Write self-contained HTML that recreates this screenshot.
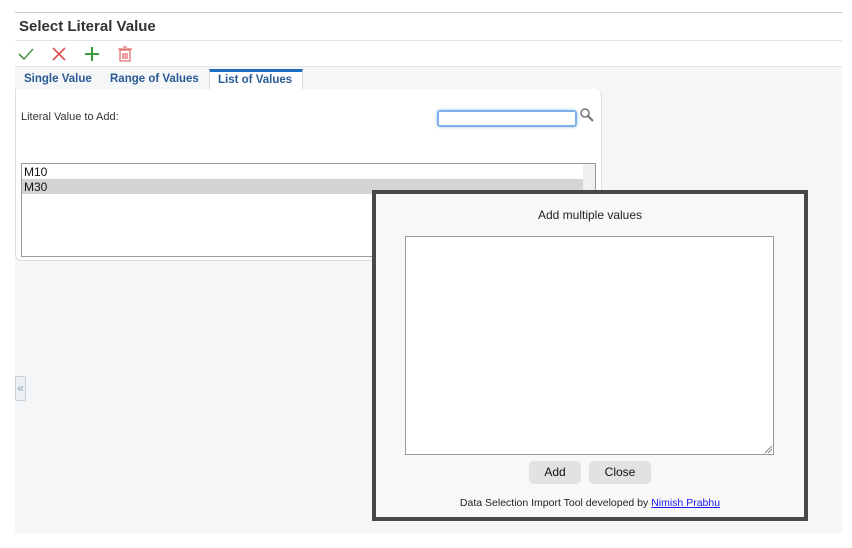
<!DOCTYPE html>
<html><head><style>
*{box-sizing:border-box;margin:0;padding:0}
body{width:852px;height:548px;background:#fff;font-family:"Liberation Sans",Arial,sans-serif;position:relative;overflow:hidden;color:#222}
.abs{position:absolute}
</style></head><body>
<div class="abs" style="left:15px;top:12px;width:827px;height:1px;background:#c8c8c8"></div>
<div class="abs" style="left:19px;top:18px;font-size:15px;font-weight:bold;color:#333">Select Literal Value</div>
<div class="abs" style="left:15px;top:40px;width:827px;height:1px;background:#e2e6ea"></div>
<svg class="abs" style="left:17px;top:45px" width="120" height="18">
<path d="M2 9 L7 14 L16 4" stroke="#4a9a4a" stroke-width="1.6" fill="none"/>
<path d="M36 3 L48 15 M48 3 L36 15" stroke="#e05050" stroke-width="1.6"/>
<path d="M75 2 V16 M68 9 H82" stroke="#3a9a3a" stroke-width="2"/>
<rect x="103" y="5" width="10" height="11" fill="none" stroke="#e07070" stroke-width="1.3"/>
<rect x="105" y="8" width="6" height="6" fill="#f0a0a0"/>
<path d="M101 4 H115 M106 2 H110" stroke="#e07070" stroke-width="1.3"/>
</svg>
<div class="abs" style="left:15px;top:66px;width:827px;height:467px;background:#f5f6f8"></div>
<div class="abs" style="left:15px;top:66px;width:827px;height:1px;background:#e2e6ea"></div>
<div class="abs" style="left:24px;top:73px;font-size:11.5px;font-weight:bold;color:#2a5a96">Single Value</div>
<div class="abs" style="left:110px;top:73px;font-size:11.5px;font-weight:bold;color:#2a5a96">Range of Values</div>
<div class="abs" style="left:209px;top:69px;width:94px;height:21px;background:#fff;border-top:3px solid #1f6fc0;border-left:1px solid #d8dde2;border-right:1px solid #d8dde2"></div>
<div class="abs" style="left:218px;top:74px;font-size:11.5px;font-weight:bold;color:#2a5a96">List of Values</div>
<div class="abs" style="left:15px;top:89px;width:587px;height:172px;background:#fff;border:1px solid #d8dde2;border-top:none;border-radius:0 6px 6px 6px"></div>
<div class="abs" style="left:209px;top:89px;width:94px;height:2px;background:#fff"></div>
<div class="abs" style="left:21px;top:111px;font-size:11px;color:#333">Literal Value to Add:</div>
<div class="abs" style="left:437px;top:110px;width:140px;height:17px;border:2px solid #7fb0ea;border-radius:3px;box-shadow:0 0 3px #9cc4f0"></div>
<svg class="abs" style="left:579px;top:107px" width="16" height="16"><circle cx="6" cy="6" r="4" fill="none" stroke="#777" stroke-width="1.5"/><path d="M9 9 L14 14" stroke="#777" stroke-width="2.2"/></svg>
<div class="abs" style="left:21px;top:163px;width:575px;height:94px;border:1px solid #999;background:#fff"></div>
<div class="abs" style="left:583px;top:164px;width:12px;height:92px;background:#f0f0f0"></div>
<div class="abs" style="left:22px;top:179px;width:561px;height:15px;background:#d4d4d4"></div>
<div class="abs" style="left:24px;top:165px;font-size:12px;color:#111">M10</div>
<div class="abs" style="left:24px;top:180px;font-size:12px;color:#111">M30</div>
<div class="abs" style="left:15px;top:376px;width:11px;height:25px;border:1px solid #c8d0d8;border-radius:2px;background:#eef1f4;font-size:12px;color:#8aa0b8;text-align:center;line-height:22px">«</div>
<div class="abs" style="left:372px;top:190px;width:436px;height:331px;border:4px solid #484848;background:#f8f8f8"></div>
<div class="abs" style="left:372px;top:208px;width:436px;text-align:center;font-size:12px;color:#222">Add multiple values</div>
<div class="abs" style="left:405px;top:236px;width:369px;height:219px;border:1px solid #999;background:#fff"></div>
<svg class="abs" style="left:763px;top:444px" width="10" height="10"><path d="M2 9 L9 2 M5 9 L9 5" stroke="#888" stroke-width="1"/></svg>
<div class="abs" style="left:529px;top:461px;width:52px;height:23px;background:#e2e2e2;border-radius:5px;font-size:12px;text-align:center;line-height:23px;color:#111">Add</div>
<div class="abs" style="left:589px;top:461px;width:62px;height:23px;background:#e2e2e2;border-radius:5px;font-size:12px;text-align:center;line-height:23px;color:#111">Close</div>
<div class="abs" style="left:372px;top:497px;width:436px;text-align:center;font-size:10.5px;color:#222">Data Selection Import Tool developed by <span style="color:#1a1aee;text-decoration:underline">Nimish Prabhu</span></div>
</body></html>
